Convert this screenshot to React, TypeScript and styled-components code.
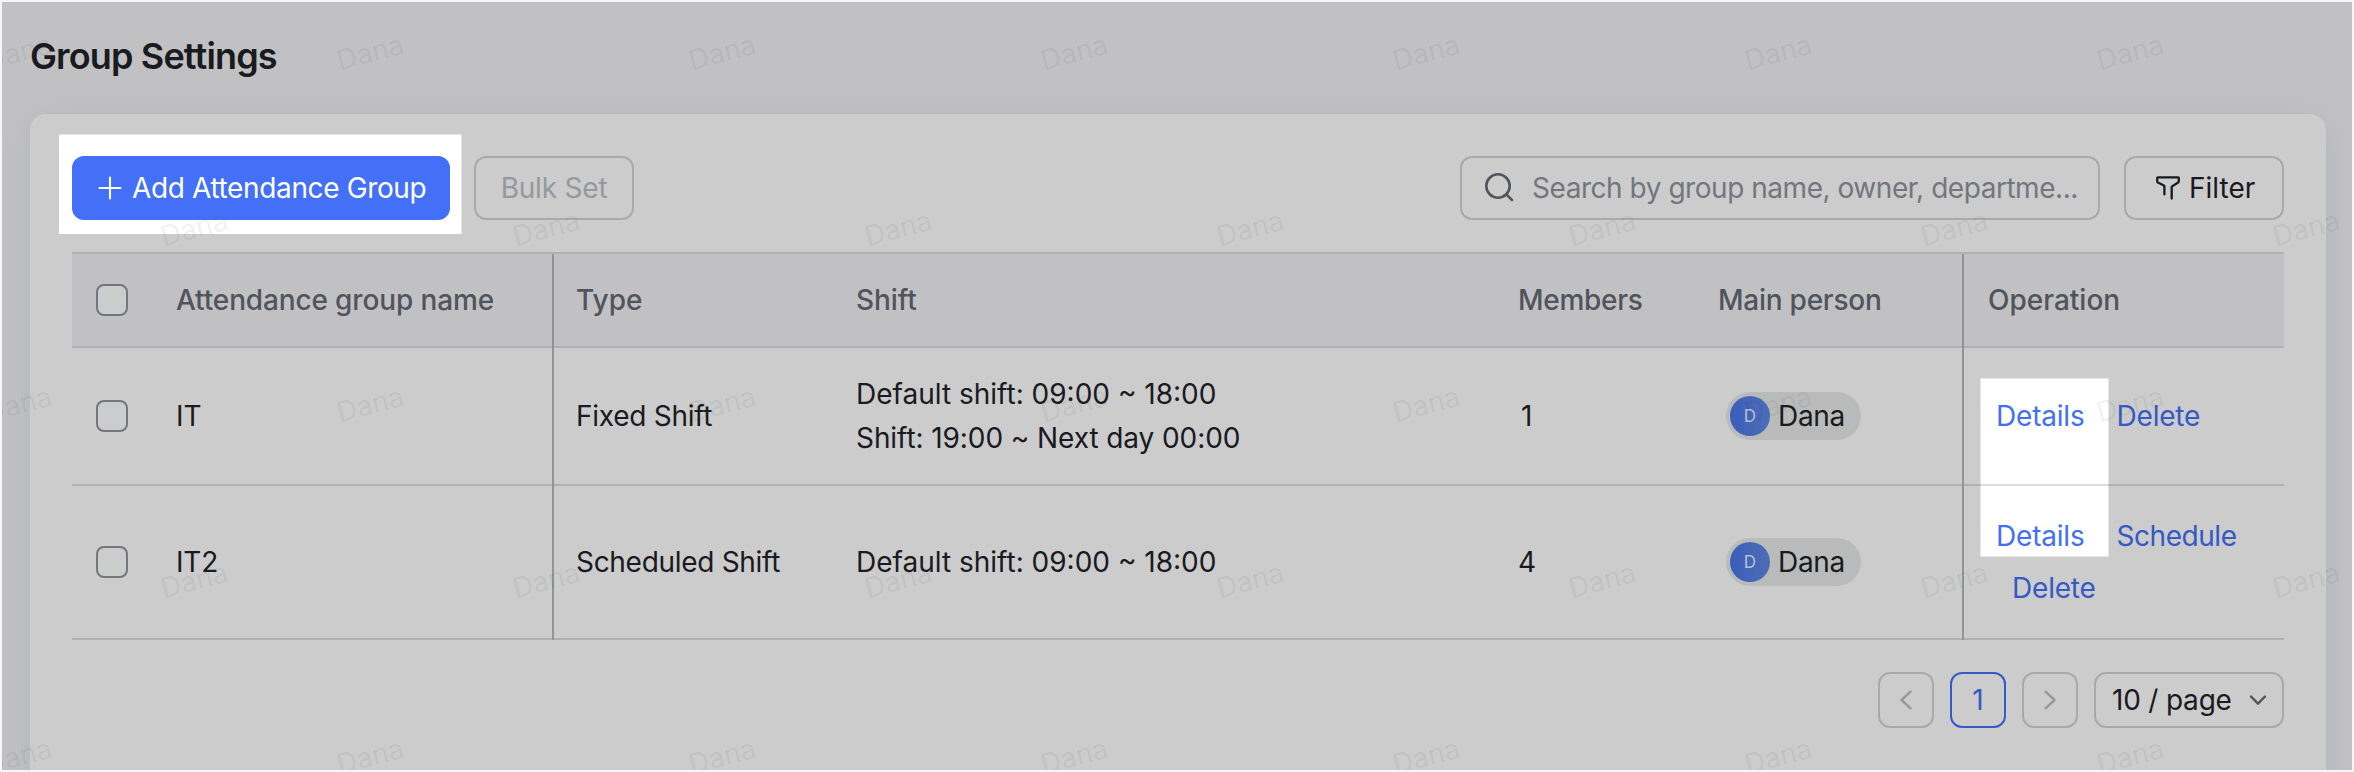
import React from "react";
import styled, { createGlobalStyle, css } from "styled-components";

const GlobalStyle = createGlobalStyle`
  * { box-sizing: border-box; }
  html, body { margin: 0; padding: 0; background: #fff; }
  body {
    font-family: Inter, "Liberation Sans", sans-serif;
    font-size: 28px;
    color: #1f2329;
    overflow: hidden;
  }
`;

const Page = styled.div`
  position: relative;
  width: 2354px;
  height: 772px;
  padding: 2px;
  background: #f6f6f6;
  overflow: hidden;
`;

const Screen = styled.main`
  position: relative;
  isolation: isolate;
  display: flex;
  flex-direction: column;
  width: 2350px;
  height: 768px;
  padding: 0 26px 0 28px;
  background: #f2f2f5;
  overflow: hidden;
`;

const Title = styled.h1`
  flex: none;
  margin: 0;
  height: 112px;
  padding-top: 32px;
  font-size: 36px;
  line-height: 44px;
  font-weight: 600;
  letter-spacing: -0.85px;
`;

const Card = styled.section`
  flex: none;
  display: flex;
  flex-direction: column;
  height: 700px;
  padding: 42px;
  border-radius: 16px;
  background: #fff;
  box-shadow: 0 4px 32px rgba(31, 55, 65, 0.08);
`;

const Toolbar = styled.div`
  display: flex;
  height: 64px;
  margin-bottom: 32px;
`;

const Button = styled.button<{ $w: number; $kind?: "primary" | "disabled"; $icon?: number }>`
  display: flex;
  align-items: center;
  justify-content: ${(p) => (p.$icon ? "flex-start" : "center")};
  gap: 9px;
  width: ${(p) => p.$w}px;
  height: 64px;
  padding: 0 0 0 ${(p) => p.$icon ?? 0}px;
  font: inherit;
  border: 2px solid #d3d4d5;
  border-radius: 12px;
  background: #fff;
  color: #1f2329;
  white-space: nowrap;
  ${(p) => p.$kind === "primary" && css`
    gap: 10px;
    border-color: #4370f7;
    background: #4370f7;
    color: #fff;
    margin-right: 24px;
  `}
  ${(p) => p.$kind === "disabled" && css`color: #bbbfc4;`}
`;

const SearchBox = styled.div`
  display: flex;
  align-items: center;
  gap: 16px;
  width: 640px;
  height: 64px;
  margin: 0 24px 0 auto;
  padding-left: 22px;
  border: 2px solid #d3d4d5;
  border-radius: 12px;
  color: #8f959e;
`;

const Label = styled.span<{ $ls?: number }>`
  letter-spacing: ${(p) => p.$ls ?? 0}px;
  white-space: nowrap;
`;

const Table = styled.div`
  position: relative;
  display: flex;
  flex-direction: column;
`;

const Row = styled.div<{ $h: number; $head?: boolean }>`
  display: grid;
  grid-template-columns: 88px 394px 279px 663px 200px 268px 320px;
  height: ${(p) => p.$h}px;
  border-bottom: 2px solid #dcdddd;
  ${(p) => p.$head && css`
    border-color: #dcdde1;
    border-top: 2px solid #dcdde1;
    background: #f2f2f5;
    color: #646a73;
    font-weight: 500;
  `}
`;

const Cell = styled.div<{ $line?: boolean; $pad?: number }>`
  position: relative;
  display: flex;
  flex-direction: column;
  justify-content: center;
  padding-left: ${(p) => p.$pad ?? 0}px;
  line-height: 44px;
  ${(p) => p.$line && css`
    &::after {
      content: "";
      position: absolute;
      z-index: 1;
      top: 0;
      bottom: -2px;
      right: 0;
      width: 2px;
      background: #b5babd;
    }
  `}
`;

const Checkbox = styled.span`
  width: 32px;
  height: 32px;
  margin-left: 24px;
  border: 2px solid #8f959e;
  border-radius: 8px;
  background: #fff;
`;

const Person = styled.div`
  display: flex;
  align-items: center;
  width: 135px;
  height: 48px;
  padding-left: 4px;
  margin-left: 6px;
  border-radius: 24px;
  background: #e8eaea;
  gap: 8px;
`;

const Avatar = styled.span`
  display: flex;
  align-items: center;
  justify-content: center;
  width: 40px;
  height: 40px;
  border-radius: 50%;
  background: linear-gradient(90deg, #4a75ea, #6288e4);
  color: #e6efff;
  font-size: 17px;
`;

const Links = styled.div`
  display: flex;
  flex-wrap: wrap;
  padding-left: 10px;
`;

const Link = styled.a<{ $ml?: number; $ls?: number }>`
  margin-left: ${(p) => p.$ml ?? 0}px;
  line-height: 52px;
  color: #4370f7;
  letter-spacing: ${(p) => p.$ls ?? -0.2}px;
`;

const Pagination = styled.nav`
  display: flex;
  justify-content: flex-end;
  gap: 16px;
  margin-top: 32px;
`;

const PageItem = styled.span<{ $active?: boolean; $wide?: boolean }>`
  display: flex;
  align-items: center;
  justify-content: ${(p) => (p.$wide ? "space-between" : "center")};
  width: ${(p) => (p.$wide ? 190 : 56)}px;
  height: 56px;
  padding: ${(p) => (p.$wide ? "0 12px 0 16px" : "0")};
  border: 2px solid ${(p) => (p.$active ? "#4370f7" : "#d3d4d5")};
  border-radius: 12px;
  color: ${(p) => (p.$active ? "#4370f7" : "#1f2329")};
`;

/* Shade over the whole screen, open around the add button and the Details links. */
const Dim = styled.div`
  position: absolute;
  inset: 2px;
  background: rgba(0, 0, 0, 0.2);
  clip-path: path(evenodd, "M0 0H2350V768H0Z M57 132.5H459.5V232H57Z M1978.5 376.5H2106.5V554.5H1978.5Z");
`;

const WatermarkLayer = styled.div`
  position: absolute;
  inset: 2px;
  overflow: hidden;
  pointer-events: none;
`;

const Mark = styled.span`
  position: absolute;
  font-size: 28px;
  line-height: 32px;
  color: rgba(31, 45, 45, 0.07);
  transform: rotate(-15deg);
`;

const marks: { x: number; y: number }[] = [];
for (let r = 0; r < 5; r++) {
  for (let c = 0; c < 8; c++) {
    const x = -18 + c * 352 + (r % 2) * 176;
    if (x < 2350) marks.push({ x, y: 34 + r * 176 });
  }
}

const PlusIcon = () => (
  <svg width="24" height="24" viewBox="0 0 24 24" stroke="currentColor" strokeWidth="2.1" strokeLinecap="round">
    <path d="M12 1.600v20.800M1.600 12h20.800" />
  </svg>
);
const SearchIcon = () => (
  <svg width="32" height="32" viewBox="0 0 32 32" fill="none" stroke="#646a73" strokeWidth="2.6">
    <circle cx="14" cy="14" r="11.700" />
    <path d="M22.300 22.300l5.700 5.700" strokeLinecap="round" />
  </svg>
);
const FilterIcon = () => (
  <svg width="24" height="24" viewBox="0 0 24 24" fill="none" stroke="currentColor" strokeWidth="2.3" strokeLinecap="round" strokeLinejoin="round">
    <path d="M8.400 18.400V9.800L1.900 6.500Q1.200 6 1.200 5.200V1.900Q1.200 1.300 1.800 1.300H22.200Q22.800 1.300 22.800 1.900V5.200Q22.800 6 22.100 6.500L15.700 10.600V22.600" />
  </svg>
);
const Chevron = ({ d, color }: { d: string; color: string }) => (
  <svg width="24" height="24" viewBox="0 0 24 24" fill="none" stroke={color} strokeWidth="2.4" strokeLinecap="round" strokeLinejoin="round">
    <path d={d} />
  </svg>
);

const PersonTag = () => (
  <Person>
    <Avatar>D</Avatar>
    <Label $ls={-0.3}>Dana</Label>
  </Person>
);

export default function App() {
  return (
    <Page>
      <GlobalStyle />
      <Screen>
        <Title>Group Settings</Title>
        <Card>
          <Toolbar>
            <Button $w={378} $kind="primary" $icon={24}><PlusIcon /><Label $ls={-0.36}>Add Attendance Group</Label></Button>
            <Button $w={160} $kind="disabled"><Label $ls={-0.2}>Bulk Set</Label></Button>
            <SearchBox><SearchIcon /><Label $ls={-0.46}>Search by group name, owner, departme...</Label></SearchBox>
            <Button $w={160} $icon={30}><FilterIcon /><Label>Filter</Label></Button>
          </Toolbar>
          <Table>
            <Row $h={96} $head>
              <Cell><Checkbox /></Cell>
              <Cell $line $pad={16}><Label $ls={-0.14}>Attendance group name</Label></Cell>
              <Cell $pad={22}><Label>Type</Label></Cell>
              <Cell $pad={23}><Label $ls={-0.1}>Shift</Label></Cell>
              <Cell $pad={22}><Label $ls={-0.3}>Members</Label></Cell>
              <Cell $line $pad={22}><Label $ls={-0.25}>Main person</Label></Cell>
              <Cell $pad={24}><Label>Operation</Label></Cell>
            </Row>
            <Row $h={138}>
              <Cell><Checkbox /></Cell>
              <Cell $line $pad={16}><Label>IT</Label></Cell>
              <Cell $pad={22}><Label $ls={-0.27}>Fixed Shift</Label></Cell>
              <Cell $pad={23}><Label>Default shift: 09:00 ~ 18:00</Label><Label $ls={-0.08}>Shift: 19:00 ~ Next day 00:00</Label></Cell>
              <Cell $pad={25}><Label>1</Label></Cell>
              <Cell $line $pad={24}><PersonTag /></Cell>
              <Cell $pad={22}><Links><Link>Details</Link><Link $ml={32}>Delete</Link></Links></Cell>
            </Row>
            <Row $h={154}>
              <Cell><Checkbox /></Cell>
              <Cell $line $pad={16}><Label $ls={-0.2}>IT2</Label></Cell>
              <Cell $pad={22}><Label $ls={-0.3}>Scheduled Shift</Label></Cell>
              <Cell $pad={23}><Label>Default shift: 09:00 ~ 18:00</Label></Cell>
              <Cell $pad={22}><Label>4</Label></Cell>
              <Cell $line $pad={24}><PersonTag /></Cell>
              <Cell $pad={22}><Links><Link>Details</Link><Link $ml={32} $ls={-0.45}>Schedule</Link><Link $ml={16}>Delete</Link></Links></Cell>
            </Row>
          </Table>
          <Pagination>
            <PageItem><Chevron d="M16.500 3.700L7.500 12l9 8.300" color="#bbbfc4" /></PageItem>
            <PageItem $active><Label>1</Label></PageItem>
            <PageItem><Chevron d="M7.500 3.700L16.500 12l-9 8.300" color="#bbbfc4" /></PageItem>
            <PageItem $wide><Label $ls={-0.2}>10 / page</Label><Chevron d="M5 8.500l7 7.200 7-7.200" color="#646a73" /></PageItem>
          </Pagination>
        </Card>
      </Screen>
      <Dim />
      <WatermarkLayer>
        {marks.map((m) => <Mark key={`${m.x}-${m.y}`} style={{ left: m.x, top: m.y }}>Dana</Mark>)}
      </WatermarkLayer>
    </Page>
  );
}
